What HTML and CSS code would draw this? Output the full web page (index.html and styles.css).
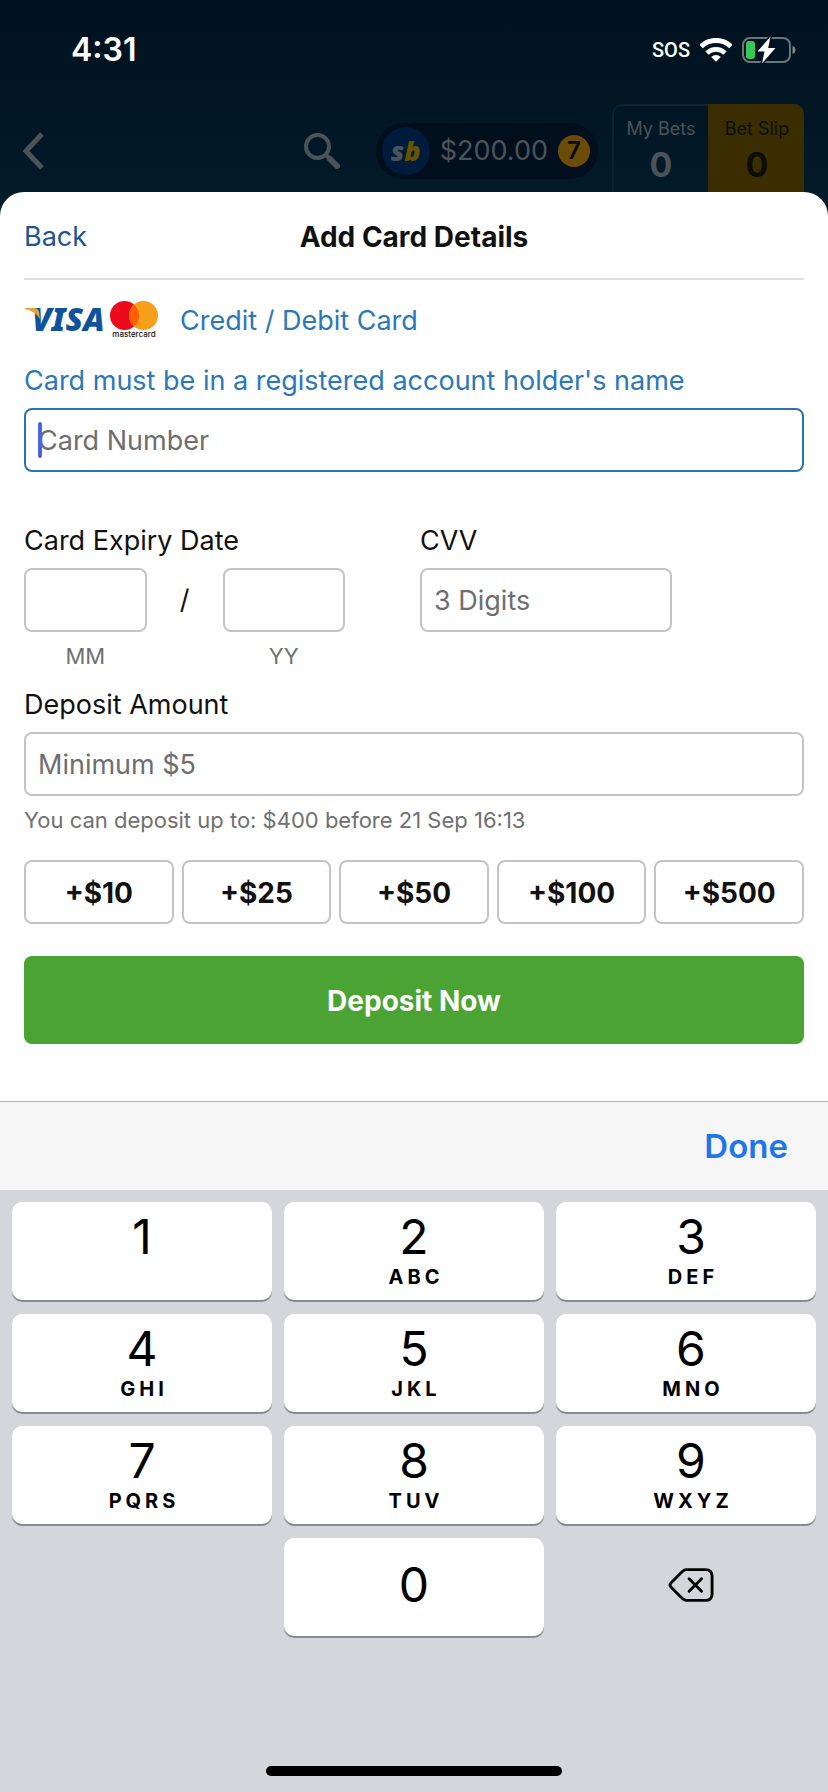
FILE: index.html
```html
<!DOCTYPE html>
<html lang="en">
<head>
<meta charset="utf-8">
<meta name="viewport" content="width=device-width, initial-scale=1">
<title>Add Card Details</title>
<link rel="stylesheet" href="styles.css">
</head>
<body>
<div class="screen">
  <div class="status-bar">
    <span class="time">4:31</span>
    <div class="status-icons">
      <span class="sos">SOS</span>
      <svg class="wifi" viewBox="0 0 32 24" aria-hidden="true">
        <path d="M1 8.500a21.500 21.500 0 0 1 30 0" fill="none" stroke="#fff" stroke-width="5"/>
        <path d="M7 15a13 13 0 0 1 18 0" fill="none" stroke="#fff" stroke-width="4.600"/>
        <path d="M11.200 18.900a7 7 0 0 1 9.600 0L16 23.800z" fill="#fff"/>
      </svg>
      <svg class="battery" viewBox="0 0 54 28" aria-hidden="true">
        <rect x="1" y="2" width="47" height="24" rx="7" fill="none" stroke="#6b757c" stroke-width="2"/>
        <path d="M50.500 10v8c2-.6 3-2.200 3-4s-1-3.400-3-4z" fill="#7e878d"/>
        <rect x="4" y="5" width="9" height="18" rx="3" fill="#34c759"/>
        <path d="M28.500.500 15.500 15.500h7L20 27.500 33.500 12h-7.300z" fill="#fff" stroke="#00121f" stroke-width="3" paint-order="stroke" stroke-linejoin="round"/>
      </svg>
    </div>
  </div>

  <header class="app-bar">
    <button class="icon-button" type="button" aria-label="Go back">
      <svg class="chevron" viewBox="0 0 24 38"><path d="M20 2 4 19l16 17" fill="none" stroke="currentColor" stroke-width="5"/></svg>
    </button>
    <button class="icon-button search-button" type="button" aria-label="Search">
      <svg class="search" viewBox="0 0 36 36"><circle cx="13.500" cy="13.500" r="11.500" fill="none" stroke="currentColor" stroke-width="4"/><path d="m22 22 3 3" stroke="currentColor" stroke-width="4"/><path d="m26 26 7 7" stroke="currentColor" stroke-width="6" stroke-linecap="round"/></svg>
    </button>
    <button class="balance" type="button">
      <span class="brand"><span>s</span><span class="brand-b">b</span></span>
      <span class="amount">$200.00</span>
      <span class="count">7</span>
    </button>
    <div class="bets">
      <button class="bet-tab" type="button"><span class="bet-label">My Bets</span><b class="bet-count">0</b></button>
      <button class="bet-tab bet-slip" type="button"><span class="bet-label">Bet Slip</span><b class="bet-count">0</b></button>
    </div>
  </header>

  <main class="sheet">
    <div class="sheet-header">
      <a class="back" href="#">Back</a>
      <h1 class="title">Add Card Details</h1>
    </div>

    <form class="form">
      <div class="method">
        <svg class="cards" viewBox="0 0 136 40" role="img" aria-label="Visa and Mastercard">
          <text class="visa" x="8" y="30">VISA</text>
          <path d="M1 7h9q4 0 5 4l1 7Q11 10 1 8z" fill="#e9a23b"/>
          <circle cx="100.500" cy="14.500" r="14.500" fill="#eb0a1e"/>
          <circle cx="119.500" cy="14.500" r="14.500" fill="#f79e1b"/>
          <path d="M110 3.500a14.500 14.500 0 0 1 0 22 14.500 14.500 0 0 1 0-22z" fill="#ff5f00"/>
          <text class="mastercard" x="110" y="36" text-anchor="middle">mastercard</text>
        </svg>
        <span>Credit / Debit Card</span>
      </div>

      <div class="field number-field">
        <label class="label notice" for="number">Card must be in a registered account holder's name</label>
        <div class="input-wrap">
          <input class="input active" id="number" type="text" inputmode="numeric" placeholder="Card Number">
          <span class="caret"></span>
        </div>
      </div>

      <div class="row">
        <fieldset class="expiry">
          <legend class="label">Card Expiry Date</legend>
          <div class="expiry-inputs">
            <div class="part">
              <input class="input" id="month" type="text" inputmode="numeric">
              <label class="caption" for="month">MM</label>
            </div>
            <span class="slash">/</span>
            <div class="part">
              <input class="input" id="year" type="text" inputmode="numeric">
              <label class="caption" for="year">YY</label>
            </div>
          </div>
        </fieldset>
        <div class="field cvv">
          <label class="label" for="cvv">CVV</label>
          <input class="input" id="cvv" type="text" inputmode="numeric" placeholder="3 Digits">
        </div>
      </div>

      <div class="field">
        <label class="label" for="deposit">Deposit Amount</label>
        <input class="input" id="deposit" type="text" inputmode="numeric" placeholder="Minimum $5">
        <p class="hint">You can deposit up to: $400 before 21 Sep 16:13</p>
      </div>

      <div class="quick">
        <button class="quick-button" type="button">+$10</button>
        <button class="quick-button" type="button">+$25</button>
        <button class="quick-button" type="button">+$50</button>
        <button class="quick-button" type="button">+$100</button>
        <button class="quick-button" type="button">+$500</button>
      </div>

      <button class="submit" type="button">Deposit Now</button>
    </form>
  </main>

  <div class="toolbar"><button class="done" type="button">Done</button></div>

  <div class="keyboard">
    <div class="keys">
      <button class="key" type="button">1<span class="letters"></span></button>
      <button class="key" type="button">2<span class="letters">ABC</span></button>
      <button class="key key-right" type="button">3<span class="letters">DEF</span></button>
      <button class="key" type="button">4<span class="letters">GHI</span></button>
      <button class="key" type="button">5<span class="letters">JKL</span></button>
      <button class="key key-right" type="button">6<span class="letters">MNO</span></button>
      <button class="key" type="button">7<span class="letters">PQRS</span></button>
      <button class="key" type="button">8<span class="letters">TUV</span></button>
      <button class="key key-right" type="button">9<span class="letters">WXYZ</span></button>
      <button class="key zero" type="button">0</button>
      <button class="key key-right delete" type="button" aria-label="Delete">
        <svg class="backspace" viewBox="0 0 48 36" fill="none" stroke="#000" stroke-width="3" stroke-linecap="round" stroke-linejoin="round"><path d="M19.500 2H39q7 0 7 7v18q0 7-7 7H19.500q-2.500 0-4.500-2L3 20q-2-2 0-4L15 4q2-2 4.500-2z"/><path d="m22 11.500 13 13m0-13-13 13"/></svg>
      </button>
    </div>
    <div class="home-indicator"></div>
  </div>
</div>
</body>
</html>
```
FILE: styles.css
```css
* { box-sizing: border-box; }

body {
  margin: 0;
  font-family: Inter, "Liberation Sans", sans-serif;
  font-size: 27px;
  line-height: 36px;
  color: #111;
}

button, input { font: inherit; color: inherit; }

button {
  margin: 0;
  padding: 0;
  border: 0;
  background: none;
}

.screen {
  display: flex;
  flex-direction: column;
  min-height: 100vh;
  background: linear-gradient(#00111f, #031a28 200px);
}

.status-bar {
  display: flex;
  justify-content: space-between;
  align-items: center;
  height: 100px;
  padding: 0 32px 0 71px;
  color: #fff;
}

.time { font-size: 32px; font-weight: 600; }

.status-icons { display: flex; align-items: center; gap: 10px; }

.sos {
  font-family: Roboto, sans-serif;
  font-size: 20px;
  font-weight: 500;
}

.wifi { width: 32px; height: 24px; }
.battery { width: 54px; height: 28px; }

.app-bar {
  display: flex;
  align-items: center;
  height: 92px;
  padding: 4px 24px 0 22px;
  color: #4a535a;
}

.icon-button { display: flex; padding-top: 6px; }
.chevron { width: 24px; height: 38px; }
.search { width: 36px; height: 36px; }
.search-button { margin-left: auto; }

.balance {
  display: flex;
  align-items: center;
  gap: 10px;
  height: 56px;
  margin: 6px 14px 0 36px;
  padding: 0 8px 0 6px;
  border-radius: 28px;
  background: #010f1d;
}

.brand {
  display: flex;
  justify-content: center;
  align-items: center;
  width: 48px;
  height: 48px;
  border-radius: 50%;
  background: #001b3c;
  font-family: "Open Sans", sans-serif;
  font-size: 27px;
  font-weight: 800;
  font-style: italic;
}

.brand-b { color: #685300; }

.count {
  display: flex;
  justify-content: center;
  align-items: center;
  width: 32px;
  height: 32px;
  border-radius: 50%;
  background: #6b4c07;
  color: #0a0a0a;
  font-size: 24px;
  font-weight: 600;
}

.bets {
  display: grid;
  grid-template-columns: 96px 96px;
  align-self: stretch;
  border-radius: 10px 10px 0 0;
  overflow: hidden;
}

.bet-tab {
  display: flex;
  flex-direction: column;
  align-items: center;
  padding-top: 10px;
  border: solid #0a2433;
  border-width: 2px 0 0 2px;
  border-radius: 10px 0 0 0;
}

.bet-slip {
  border-color: #3a2e00;
  border-radius: 0;
  background: #3a2e00;
  color: #0c0c08;
}

.bet-label { font-size: 18px; line-height: 26px; }
.bet-count { font-size: 34px; line-height: 46px; }

.sheet {
  padding: 0 24px 57px;
  border-radius: 24px 24px 0 0;
  background: #fff;
}

.sheet-header {
  display: grid;
  grid-template-columns: 1fr auto 1fr;
  align-items: center;
  height: 88px;
  padding-top: 4px;
  border-bottom: 2px solid #dfdfdf;
}

.back { color: #1d5496; text-decoration: none; }

.title { margin: 0; font-size: 28px; font-weight: 700; }

.form { display: flex; flex-direction: column; }

.method {
  display: flex;
  align-items: center;
  gap: 20px;
  height: 82px;
  color: #2b78b9;
}

.cards { width: 136px; height: 40px; overflow: visible; }

.visa {
  font: italic 900 32px "Noto Sans", "Open Sans", sans-serif;
  fill: #10539c;
}

.mastercard {
  font: 500 8px Inter, sans-serif;
  fill: #111;
}

.field { display: flex; flex-direction: column; }

.label { margin-bottom: 9px; padding: 0; line-height: 36px; }

.notice { color: #2b78b9; }

.number-field { margin: 1px 0 51px; }

.input {
  width: 100%;
  min-width: 0;
  height: 64px;
  padding: 0 12px;
  border: 2px solid #c4c4c4;
  border-radius: 8px;
  background: #fff;
}

.input::placeholder { color: #6e6e6e; opacity: 1; }

.active { border-color: #2b73ae; }

.input-wrap { position: relative; display: flex; }

.caret {
  position: absolute;
  top: 14px;
  left: 14px;
  width: 4px;
  height: 36px;
  border-radius: 2px;
  background: #4c64dc;
}

.row { display: flex; margin-bottom: 17px; }

.expiry {
  flex: 0 0 321px;
  min-width: 0;
  margin: 0;
  padding: 0;
  border: 0;
}

.expiry-inputs { display: flex; }

.part {
  display: flex;
  flex: 1;
  flex-direction: column;
  align-items: center;
}

.slash {
  width: 76px;
  line-height: 64px;
  text-align: center;
}

.caption {
  margin-top: 10px;
  color: #707070;
  font-size: 22px;
  line-height: 28px;
}

.cvv { flex: 0 0 252px; margin-left: 75px; }

.hint {
  margin: 10px 0 0;
  color: #707070;
  font-size: 22px;
  line-height: 28px;
}

.quick {
  display: grid;
  grid-template-columns: repeat(5, 1fr);
  gap: 8px;
  margin: 26px 0 32px;
}

.quick-button {
  height: 64px;
  padding-top: 2px;
  border: 2px solid #c4c4c4;
  border-radius: 8px;
  font-size: 28px;
  font-weight: 700;
}

.submit {
  height: 88px;
  padding-top: 2px;
  border-radius: 8px;
  background: #4aa333;
  color: #fff;
  font-size: 28px;
  font-weight: 700;
}

.toolbar {
  display: flex;
  justify-content: flex-end;
  align-items: center;
  height: 89px;
  padding: 0 40px;
  border-top: 1px solid #b4b4b6;
  background: #f6f6f6;
}

.done { color: #1f76ea; font-size: 33px; font-weight: 600; }

.keyboard {
  display: flex;
  flex: 1;
  flex-direction: column;
  justify-content: space-between;
  align-items: center;
  padding: 12px 12px 16px;
  background: #d5d6dc;
}

.keys {
  display: grid;
  grid-template-columns: repeat(3, 1fr);
  grid-auto-rows: 98px;
  gap: 14px 12px;
  width: 100%;
}

.key {
  display: flex;
  flex-direction: column;
  justify-content: center;
  align-items: center;
  border-radius: 10px;
  background: #fff;
  box-shadow: 0 2px 0 #898a8d;
  color: #000;
  font-size: 48px;
  line-height: 48px;
}

.key-right { padding-left: 10px; }

.letters {
  height: 28px;
  padding-left: 4px;
  font-size: 20px;
  font-weight: 700;
  letter-spacing: 4px;
  line-height: 32px;
}

.zero { grid-column: 2; padding-bottom: 4px; }

.delete { padding-bottom: 4px; background: none; box-shadow: none; }

.backspace { width: 46px; height: 36px; }

.home-indicator {
  width: 296px;
  max-width: 40%;
  height: 10px;
  border-radius: 5px;
  background: #000;
}
```
